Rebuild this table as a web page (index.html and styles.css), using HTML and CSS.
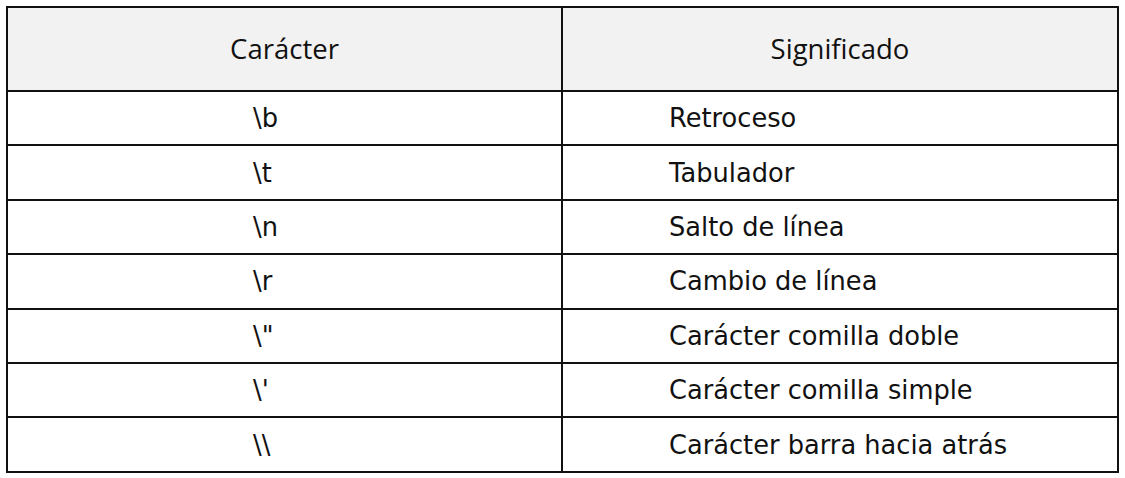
FILE: index.html
```html
<!DOCTYPE html>
<html lang="es">
<head>
<meta charset="utf-8">
<link rel="stylesheet" href="styles.css">
</head>
<body>
<table class="esc">
  <thead>
    <tr><th class="c1">Carácter</th><th class="c2">Significado</th></tr>
  </thead>
  <tbody>
    <tr><td class="code">\b</td><td class="desc">Retroceso</td></tr>
    <tr><td class="code">\t</td><td class="desc">Tabulador</td></tr>
    <tr><td class="code">\n</td><td class="desc">Salto de línea</td></tr>
    <tr><td class="code">\r</td><td class="desc">Cambio de línea</td></tr>
    <tr><td class="code">\"</td><td class="desc">Carácter comilla doble</td></tr>
    <tr><td class="code">\'</td><td class="desc">Carácter comilla simple</td></tr>
    <tr><td class="code">\\</td><td class="desc">Carácter barra hacia atrás</td></tr>
  </tbody>
</table>
</body>
</html>
```
FILE: styles.css
```css
html, body { margin: 0; padding: 0; background: #fff; }
body { padding: 6px 0 0 6px; }
.esc {
  border-collapse: collapse;
  width: 1113px;
  table-layout: fixed;
  color: #111;
}
.esc th, .esc td {
  border: 2px solid #111;
  padding: 0;
}
.esc th {
  background: #f2f2f2;
  height: 80px;
  padding-bottom: 2px;
  font-family: "Open Sans", sans-serif;
  font-weight: 400;
  font-size: 27.5px;
  text-align: center;
}
.c1 { width: 553px; }
.esc td {
  height: 52.4px;
  font-family: "DejaVu Sans", Verdana, sans-serif;
  font-size: 25.7px;
}
.code { padding-left: 245px !important; }
.desc { padding-left: 106px !important; }
```
